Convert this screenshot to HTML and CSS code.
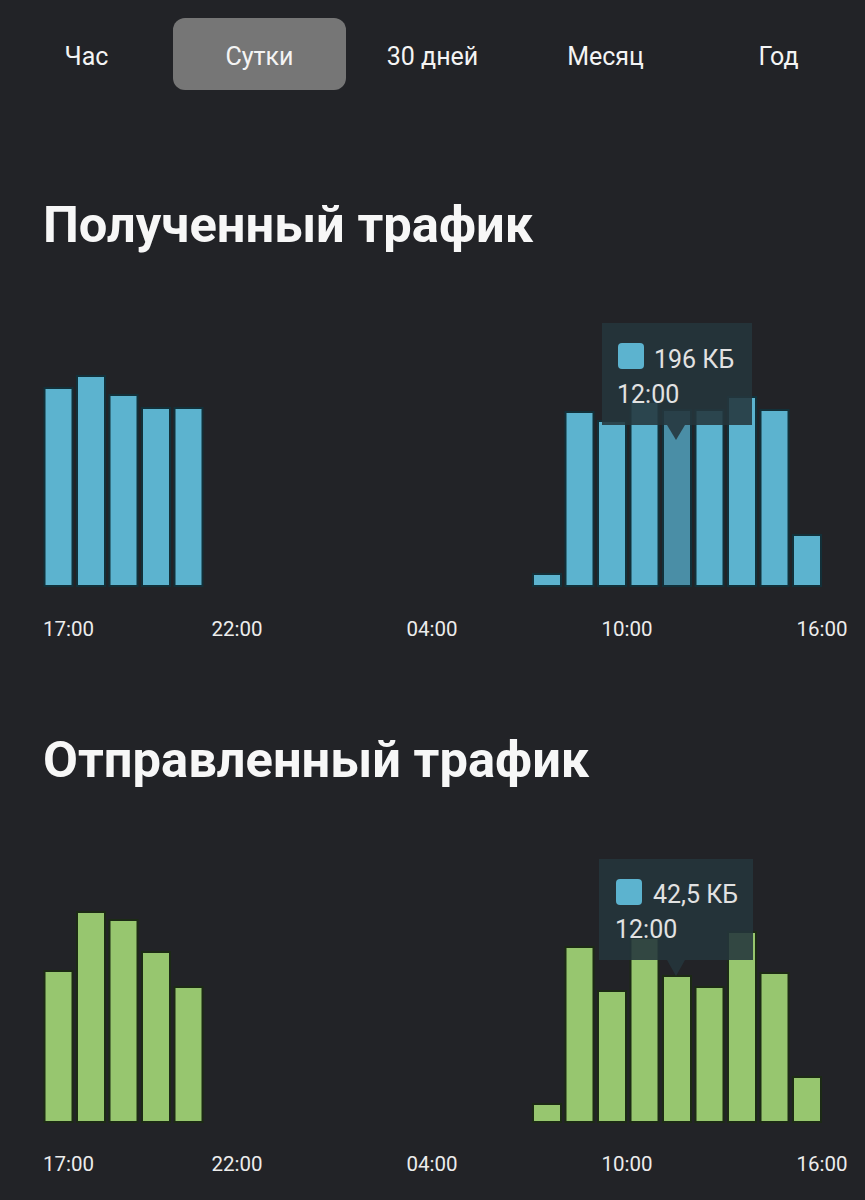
FILE: index.html
```html
<!DOCTYPE html>
<html lang="ru">

<head>
    <meta charset="UTF-8">
    <meta name="viewport" content="width=device-width, initial-scale=1.0">
    <title>Трафик</title>
    <link rel="stylesheet" href="styles.css">
</head>

<body>
    <nav class="tabs">
        <div class="tab">Час</div>
        <div class="tab active">Сутки</div>
        <div class="tab">30 дней</div>
        <div class="tab">Месяц</div>
        <div class="tab">Год</div>
    </nav>

    <section class="section">
        <h2 class="title">Полученный трафик</h2>
        <svg class="chart" viewBox="0 0 865 340" width="865" height="340">
            <g class="bars blue">
                <rect x="44.5" y="78" width="28" height="198"></rect>
                <rect x="77" y="66" width="28" height="210"></rect>
                <rect x="109.5" y="85" width="28" height="191"></rect>
                <rect x="142" y="98" width="28" height="178"></rect>
                <rect x="174.5" y="98" width="28" height="178"></rect>
                <rect x="533" y="264" width="28" height="12"></rect>
                <rect x="565.5" y="102" width="28" height="174"></rect>
                <rect x="598" y="111" width="28" height="165"></rect>
                <rect x="630.5" y="92" width="28" height="184"></rect>
                <rect class="hl" x="663" y="100" width="28" height="176"></rect>
                <rect x="695.5" y="100" width="28" height="176"></rect>
                <rect x="728" y="87" width="28" height="189"></rect>
                <rect x="760.5" y="100" width="28" height="176"></rect>
                <rect x="793" y="225" width="28" height="51"></rect>
            </g>
            <g class="tip">
                <rect class="tip-box" x="602" y="13" width="150" height="102"></rect>
                <polygon class="tip-box" points="667,115 685,115 676,130"></polygon>
                <rect class="swatch" x="618" y="33" width="26" height="26" rx="4"></rect>
                <text class="tip-text" x="654" y="58">196 КБ</text>
                <text class="tip-text" x="617" y="93">12:00</text>
            </g>
            <g class="axis">
                <text x="43" y="326">17:00</text>
                <text x="237" y="326" text-anchor="middle">22:00</text>
                <text x="432" y="326" text-anchor="middle">04:00</text>
                <text x="627" y="326" text-anchor="middle">10:00</text>
                <text x="822" y="326" text-anchor="middle">16:00</text>
            </g>
        </svg>
    </section>

    <section class="section">
        <h2 class="title">Отправленный трафик</h2>
        <svg class="chart" viewBox="0 0 865 340" width="865" height="340">
            <g class="bars green">
                <rect x="44.5" y="126" width="28" height="151"></rect>
                <rect x="77" y="67" width="28" height="210"></rect>
                <rect x="109.5" y="75" width="28" height="202"></rect>
                <rect x="142" y="107" width="28" height="170"></rect>
                <rect x="174.5" y="142" width="28" height="135"></rect>
                <rect x="533" y="259" width="28" height="18"></rect>
                <rect x="565.5" y="102" width="28" height="175"></rect>
                <rect x="598" y="146" width="28" height="131"></rect>
                <rect x="630.5" y="93" width="28" height="184"></rect>
                <rect x="663" y="131" width="28" height="146"></rect>
                <rect x="695.5" y="142" width="28" height="135"></rect>
                <rect x="728" y="87" width="28" height="190"></rect>
                <rect x="760.5" y="128" width="28" height="149"></rect>
                <rect x="793" y="232" width="28" height="45"></rect>
            </g>
            <g class="tip">
                <rect class="tip-box" x="599" y="14" width="154" height="101"></rect>
                <polygon class="tip-box" points="667,115 685,115 676,131"></polygon>
                <rect class="swatch" x="616" y="34" width="26" height="26" rx="4"></rect>
                <text class="tip-text" x="653" y="58">42,5 КБ</text>
                <text class="tip-text" x="615" y="93">12:00</text>
            </g>
            <g class="axis">
                <text x="43" y="326">17:00</text>
                <text x="237" y="326" text-anchor="middle">22:00</text>
                <text x="432" y="326" text-anchor="middle">04:00</text>
                <text x="627" y="326" text-anchor="middle">10:00</text>
                <text x="822" y="326" text-anchor="middle">16:00</text>
            </g>
        </svg>
    </section>
</body>

</html>
```

FILE: styles.css
```css
body {
    margin: 0;
    background-color: #222327;
    color: #f4f4f4;
    font-family: Roboto, "Noto Sans", sans-serif;
    width: 865px;
    height: 1200px;
    overflow: hidden;
}

.tabs {
    display: grid;
    grid-template-columns: repeat(5, 173px);
    padding-top: 18px;
}

.tab {
    height: 72px;
    display: flex;
    align-items: center;
    justify-content: center;
    font-size: 25px;
    padding-top: 4px;
    box-sizing: border-box;
}

.tab.active {
    background-color: #767676;
    border-radius: 12px;
}

.section {
    display: flex;
    flex-direction: column;
}

.title {
    margin: 105px 0 55px 43px;
    font-size: 50.7px;
    line-height: 60px;
    font-weight: 700;
    color: #f7f7f7;
}

.section + .section .title {
    margin-top: 80px;
}

.chart {
    display: block;
}

.bars rect {
    stroke-width: 2;
}

.bars.blue rect {
    fill: #5cb3cf;
    stroke: #123039;
}

.bars.blue rect.hl {
    fill: #4a8ea6;
}

.bars.green rect {
    fill: #97c66f;
    stroke: #1c2a15;
}

.tip-box {
    fill: rgba(36, 54, 60, 0.88);
}

.swatch {
    fill: #5cb3cf;
}

.tip-text {
    fill: #e2e2e2;
    font-size: 25px;
    font-family: Roboto, sans-serif;
}

.axis text {
    fill: #ececec;
    font-size: 20.5px;
    font-family: Roboto, sans-serif;
}
```
